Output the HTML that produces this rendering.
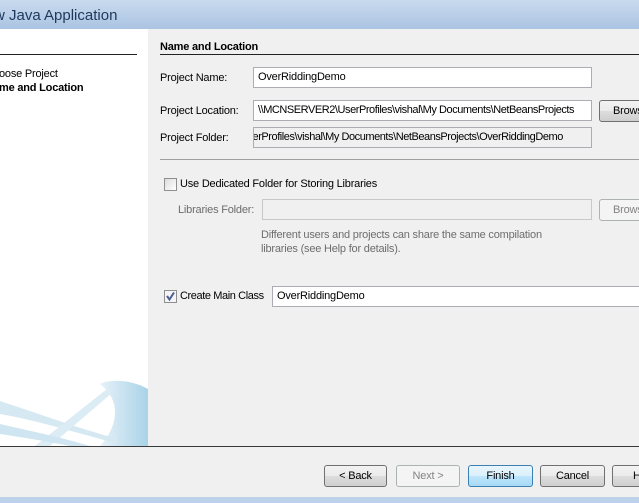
<!DOCTYPE html>
<html><head><style>
*{margin:0;padding:0;box-sizing:border-box}
body{width:639px;height:503px;overflow:hidden;background:#f0f0f0;font-family:"Liberation Sans",sans-serif;font-size:11px;letter-spacing:-0.2px;color:#000;position:relative}
.a{position:absolute;white-space:nowrap}
.title{left:0;top:0;width:639px;height:29px;background:linear-gradient(#c9daee,#abc4e2)}
.inp{position:absolute;background:#fff;border:1px solid #abadb3;height:21px;padding:3px 4px;overflow:hidden;white-space:nowrap}
.btn{position:absolute;height:22px;border:1px solid #707070;border-radius:3px;background:linear-gradient(#f2f2f2 0,#ebebeb 50%,#dddddd 51%,#cfcfcf 100%);text-align:center;line-height:20px;font-size:11px}
.dis{border-color:#adb2b5;background:#f4f4f4;color:#838383}
.cb{position:absolute;width:13px;height:13px;border:1px solid #8e8f8f;background:linear-gradient(135deg,#dcdcdc,#fff)}
</style></head><body>
<div class="a title"></div>
<div class="a" style="left:-6px;top:7px;font-size:15px;letter-spacing:0;color:#1e395b">w Java Application</div>
<div class="a" style="left:0;top:29px;width:148px;height:417px;background:#fff;overflow:hidden">
<svg width="148" height="417" style="position:absolute;left:0;top:0">
<defs><linearGradient id="g" x1="0" y1="0" x2="1" y2="0"><stop offset="0" stop-color="#e6f1f8"/><stop offset="1" stop-color="#a9d3e8"/></linearGradient></defs>
<path d="M148 360 C130 350 110 350 100 355 C120 370 120 395 100 417 L148 417Z" fill="url(#g)"/>
<path d="M0 372 C40 385 80 400 118 410 L116 414 C80 405 40 392 0 385Z" fill="#d6e9f3"/>
<path d="M107 360 L35 417 L50 417 L112 364Z" fill="#dbecf5"/>
<path d="M0 395 C30 402 60 408 90 417 L70 417 C45 412 20 408 0 405Z" fill="#cfe5f1"/>
</svg>
</div>
<div class="a" style="left:0;top:54px;width:137px;height:1px;background:#222"></div>
<div class="a" style="left:-1px;top:68px">oose Project</div>
<div class="a" style="left:-1px;top:82px;font-weight:bold">me and Location</div>
<div class="a" style="left:160px;top:41px;font-weight:bold">Name and Location</div>
<div class="a" style="left:160px;top:54px;width:479px;height:1px;background:#222"></div>
<div class="a" style="left:160px;top:72px">Project Name:</div>
<div class="inp" style="left:253px;top:67px;width:339px">OverRiddingDemo</div>
<div class="a" style="left:160px;top:105px">Project Location:</div>
<div class="inp" style="left:253px;top:100px;width:339px;letter-spacing:-0.45px">\\MCNSERVER2\UserProfiles\vishal\My Documents\NetBeansProjects</div>
<div class="btn" style="left:599px;top:100px;width:60px;text-align:left;padding-left:13px">Browse...</div>
<div class="a" style="left:160px;top:132px">Project Folder:</div>
<div class="inp" style="left:253px;top:127px;width:339px;background:#f0f0f0;letter-spacing:-0.45px;text-indent:-18px">UserProfiles\vishal\My Documents\NetBeansProjects\OverRiddingDemo</div>
<div class="a" style="left:160px;top:159px;width:479px;height:1px;background:#a0a0a0"></div>
<div class="cb" style="left:164px;top:178px"></div>
<div class="a" style="left:180px;top:178px">Use Dedicated Folder for Storing Libraries</div>
<div class="a" style="left:178px;top:204px;color:#6d6d6d">Libraries Folder:</div>
<div class="inp" style="left:262px;top:199px;width:330px;background:#f0f0f0;border-color:#c8c8c8"></div>
<div class="btn dis" style="left:599px;top:199px;width:60px;text-align:left;padding-left:13px">Browse...</div>
<div class="a" style="left:261px;top:228px;color:#6d6d6d;line-height:14px">Different users and projects can share the same compilation<br>libraries (see Help for details).</div>
<div class="cb" style="left:164px;top:290px;background:#f4f4f4"><svg width="11" height="11" style="position:absolute;left:0;top:0"><path d="M2 5 L4.5 8.5 L9 1.5" stroke="#4a5f97" stroke-width="2" fill="none"/></svg></div>
<div class="a" style="left:180px;top:290px;letter-spacing:-0.4px">Create Main Class</div>
<div class="inp" style="left:272px;top:286px;width:380px">OverRiddingDemo</div>
<div class="a" style="left:0;top:446px;width:639px;height:1px;background:#3a3a3a"></div>
<div class="btn" style="left:324px;top:465px;width:63px">&lt; Back</div>
<div class="btn dis" style="left:396px;top:465px;width:64px">Next &gt;</div>
<div class="btn" style="left:468px;top:465px;width:65px;border-color:#3c7fb1;background:linear-gradient(#eaf6fd 0,#d9f0fc 50%,#bee6fd 51%,#a7d9f5 100%)">Finish</div>
<div class="btn" style="left:540px;top:465px;width:65px">Cancel</div>
<div class="btn" style="left:612px;top:465px;width:60px;text-align:left;padding-left:20px">Help</div>
<div class="a" style="left:0;top:497px;width:639px;height:6px;background:#bcd1ea"></div>
</body></html>
